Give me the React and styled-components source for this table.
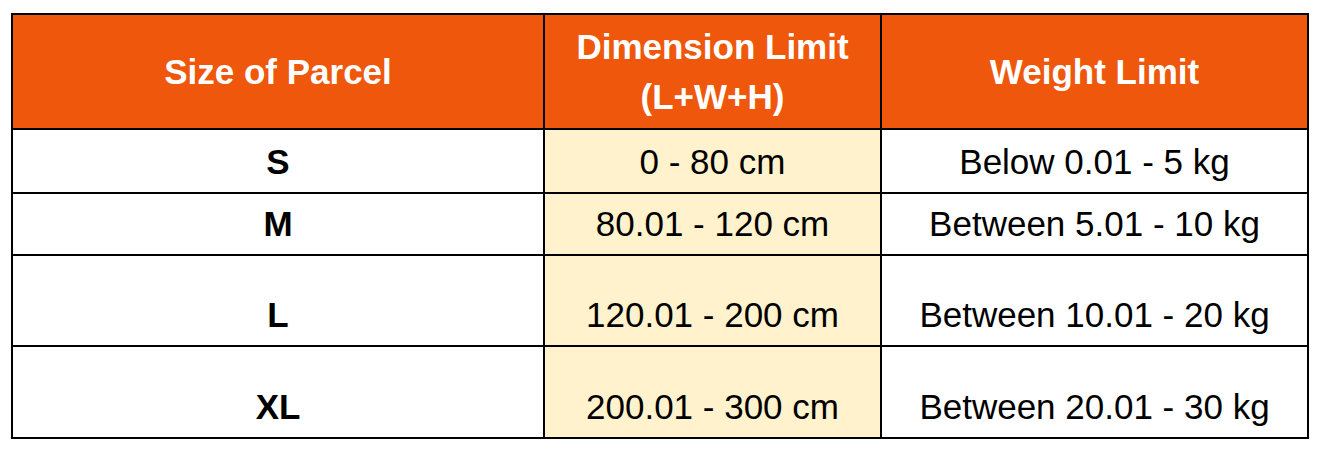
import { Fragment } from 'react';
import styled, { createGlobalStyle } from 'styled-components';

const GlobalStyle = createGlobalStyle`
  html, body {
    margin: 0;
    padding: 0;
    background: #ffffff;
  }
  body {
    font-family: "Liberation Sans", Arial, sans-serif;
  }
`;

const Page = styled.div`
  padding: 13px 0 0 11px;
`;

const Table = styled.div`
  display: grid;
  grid-template-columns: 530px 335px 425px;
  grid-template-rows: 113px 62px 60px 89px 90px;
  gap: 2px;
  padding: 2px;
  width: max-content;
  background: #000000;
`;

const HeadCell = styled.div`
  display: flex;
  align-items: center;
  justify-content: center;
  text-align: center;
  background: #ee570c;
  color: #ffffff;
  font-size: 35px;
  font-weight: 700;
  line-height: 50px;
`;

const Cell = styled.div`
  display: flex;
  align-items: flex-end;
  justify-content: center;
  background: ${({ $tone }) => ($tone === 'yellow' ? '#fff2cc' : '#ffffff')};
  color: #000000;
  font-size: 35px;
  font-weight: ${({ $bold }) => ($bold ? 700 : 400)};
  line-height: 61px;
  white-space: nowrap;
`;

const rows = [
  { size: 'S', dim: '0 - 80 cm', weight: 'Below 0.01 - 5 kg' },
  { size: 'M', dim: '80.01 - 120 cm', weight: 'Between 5.01 - 10 kg' },
  { size: 'L', dim: '120.01 - 200 cm', weight: 'Between 10.01 - 20 kg' },
  { size: 'XL', dim: '200.01 - 300 cm', weight: 'Between 20.01 - 30 kg' },
];

export default function App() {
  return (
    <>
      <GlobalStyle />
      <Page>
        <Table>
          <HeadCell>Size of Parcel</HeadCell>
          <HeadCell>
            Dimension Limit
            <br />
            (L+W+H)
          </HeadCell>
          <HeadCell>Weight Limit</HeadCell>
          {rows.map((r) => (
            <Fragment key={r.size}>
              <Cell $bold>{r.size}</Cell>
              <Cell $tone="yellow">{r.dim}</Cell>
              <Cell>{r.weight}</Cell>
            </Fragment>
          ))}
        </Table>
      </Page>
    </>
  );
}
